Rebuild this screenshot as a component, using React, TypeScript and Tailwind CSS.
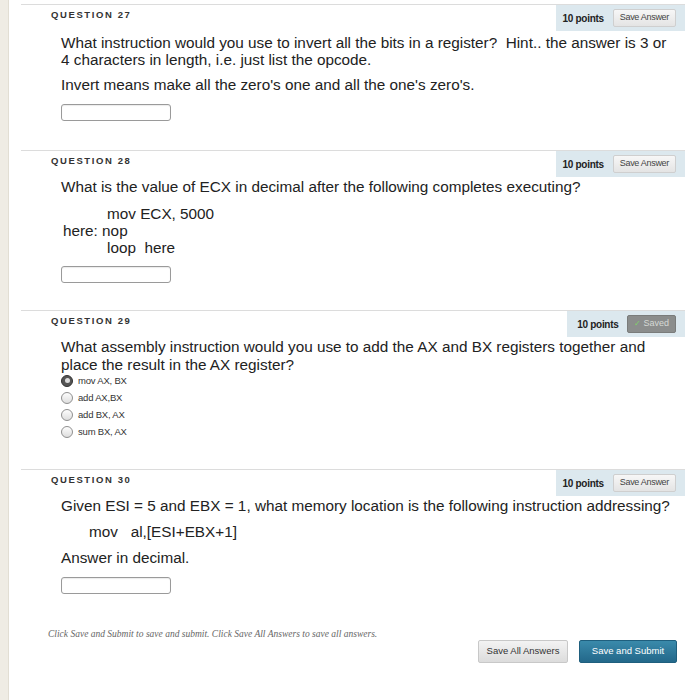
import React from "react";

const font = { fontFamily: '"Liberation Sans", Arial, sans-serif' };

function PointsBox({ saved }: { saved?: boolean }) {
  return (
    <div className={`flex items-center h-[26px] bg-[#dce8ee] ${saved ? "pl-[10px] pr-[9px]" : "pl-[7px] pr-[9px]"}`}>
      <span className="text-[10px] font-bold text-[#222] tracking-[-0.3px] mr-[9px]">10 points</span>
      {saved ? (
        <span className="flex items-center h-[18px] px-[6px] bg-[#8b8d8c] border border-[#7a7c7b] rounded-[2px] text-[9px] text-[#d5d9d5]">
          <span className="text-[#7fd36a] mr-[2px] text-[8px]">✓</span>Saved
        </span>
      ) : (
        <span className="flex items-center h-[18px] px-[6px] bg-gradient-to-b from-[#f7f7f7] to-[#e4e4e4] border border-[#cfcfcf] rounded-[2px] text-[9px] text-[#444] tracking-[-0.3px]">
          Save Answer
        </span>
      )}
    </div>
  );
}

function Header({ n, saved }: { n: number; saved?: boolean }) {
  return (
    <div className="flex items-start justify-between h-[27px]">
      <span className="pl-[30px] h-[21px] flex items-center text-[9.5px] font-bold tracking-[1.6px] text-[#333]">QUESTION {n}</span>
      <PointsBox saved={saved} />
    </div>
  );
}

function Input() {
  return <div className="w-[110px] h-[17px] border border-[#9a9a9a] rounded-[3px] bg-white shadow-[inset_0_1px_1px_rgba(0,0,0,0.08)]" />;
}

function Radio({ checked }: { checked?: boolean }) {
  if (checked)
    return (
      <span className="w-[12px] h-[12px] rounded-full bg-[#555] border border-[#333] flex items-center justify-center">
        <span className="w-[5px] h-[5px] rounded-full bg-[#ddd]" />
      </span>
    );
  return <span className="w-[12px] h-[12px] rounded-full bg-gradient-to-b from-[#fdfdfd] to-[#dedede] border border-[#8f8f8f]" />;
}

export default function App() {
  return (
    <div className="flex w-[685px] h-[700px] bg-white overflow-hidden" style={font}>
      <div className="w-[9px] h-full bg-[#efece4] border-r border-[#e2ded3]" />
      <div className="flex-1 pl-[12px] pt-[4px] text-[#222]">
        {/* Q27 */}
        <div className="border-t border-[#dcdcdc] h-[146px]">
          <Header n={27} />
          <div className="pl-[40px] w-[652px] pt-[2px] text-[15.3px] leading-[17px]">
            <p>What instruction would you use to invert all the bits in a register?&nbsp; Hint.. the answer is 3 or 4 characters in length, i.e. just list the opcode.</p>
            <p className="mt-[8px]">Invert means make all the zero's one and all the one's zero's.</p>
            <div className="mt-[11px]"><Input /></div>
          </div>
        </div>
        {/* Q28 */}
        <div className="border-t border-[#dcdcdc] h-[160px]">
          <Header n={28} />
          <div className="pl-[40px] w-[652px] pt-[0px] text-[15.3px] leading-[17px]">
            <p>What is the value of ECX in decimal after the following completes executing?</p>
            <p className="mt-[10px] pl-[46px]">mov ECX, 5000</p>
            <p className="pl-[2px]">here: nop</p>
            <p className="pl-[46px]">loop&nbsp; here</p>
            <div className="mt-[10px]"><Input /></div>
          </div>
        </div>
        {/* Q29 */}
        <div className="border-t border-[#dcdcdc] h-[159px]">
          <Header n={29} saved />
          <div className="pl-[40px] w-[652px] pt-[0px] text-[15.3px] leading-[18px]">
            <p>What assembly instruction would you use to add the AX and BX registers together and place the result in the AX register?</p>
            <div className="flex flex-col -mt-[2px]">
              {[
                ["mov AX, BX", true],
                ["add AX,BX", false],
                ["add BX, AX", false],
                ["sum BX, AX", false],
              ].map(([t, c]) => (
                <div key={t as string} className="flex items-center h-[17px] gap-[5px]">
                  <Radio checked={c as boolean} />
                  <span className="text-[9.5px] text-[#333] tracking-[-0.2px]">{t as string}</span>
                </div>
              ))}
            </div>
          </div>
        </div>
        {/* Q30 */}
        <div className="border-t border-[#dcdcdc] h-[140px]">
          <Header n={30} />
          <div className="pl-[40px] w-[652px] pt-[0px] text-[15.3px] leading-[17px]">
            <p>Given ESI = 5 and EBX = 1, what memory location is the following instruction addressing?</p>
            <p className="mt-[9px] pl-[28px]">mov&nbsp;&nbsp; al,[ESI+EBX+1]</p>
            <p className="mt-[9px]">Answer in decimal.</p>
            <div className="mt-[11px]"><Input /></div>
          </div>
        </div>
        {/* Footer */}
        <div className="pl-[27px] pt-[19px]">
          <p className="italic text-[9.5px] leading-[12px] text-[#666]" style={{ fontFamily: '"Liberation Serif", "Times New Roman", serif' }}>
            Click Save and Submit to save and submit. Click Save All Answers to save all answers.
          </p>
          <div className="flex justify-end gap-[11px] pr-[8px] mt-[0px]">
            <span className="flex items-center justify-center w-[90px] h-[23px] rounded-[2px] bg-gradient-to-b from-[#f3f3f3] to-[#dcdcdc] border border-[#c8c8c8] text-[9.5px] text-[#333]">
              Save All Answers
            </span>
            <span className="flex items-center justify-center w-[98px] h-[23px] rounded-[2px] bg-gradient-to-b from-[#3a8aab] to-[#23688a] border border-[#1f5f7e] text-[9.5px] text-white">
              Save and Submit
            </span>
          </div>
        </div>
      </div>
    </div>
  );
}
